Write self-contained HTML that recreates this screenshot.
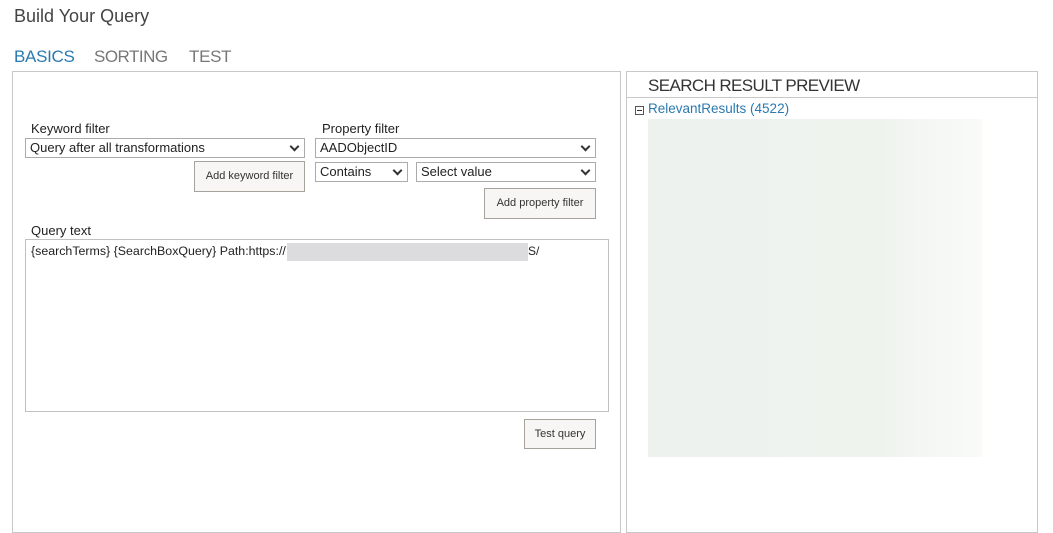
<!DOCTYPE html>
<html><head><style>
body{margin:0;width:1053px;height:521px;background:#fff;font-family:"Liberation Sans",sans-serif;position:relative;overflow:hidden;color:#333}
.a{position:absolute;white-space:nowrap}
.sel{position:absolute;border:1px solid #ababab;background:#fff;font-size:13px;box-sizing:border-box;padding:2px 4px;color:#222;line-height:14px}
.sel:after{content:"";position:absolute;right:6px;top:4px;width:5px;height:5px;border-right:2px solid #333;border-bottom:2px solid #333;transform:rotate(45deg)}
.btn{position:absolute;border:1px solid #a6a39d;background:#f7f6f4;box-sizing:border-box;font-size:11px;color:#333;text-align:center}
</style></head><body>
<div class="a" style="left:14px;top:6px;font-size:18px;color:#444">Build Your Query</div>
<div class="a" style="left:14px;top:47px;font-size:17px;color:#2a7ab0;letter-spacing:-0.3px">BASICS</div>
<div class="a" style="left:94px;top:47px;font-size:17px;color:#777;letter-spacing:-0.5px">SORTING</div>
<div class="a" style="left:189px;top:47px;font-size:17px;color:#777;letter-spacing:-0.3px">TEST</div>
<div class="a" style="left:12px;top:71px;width:607px;height:460px;border:1px solid #c8c8c8"></div>
<div class="a" style="left:626px;top:71px;width:410px;height:460px;border:1px solid #c8c8c8"></div>
<div class="a" style="left:627px;top:97px;width:410px;height:1px;background:#c8c8c8"></div>
<div class="a" style="left:31px;top:121px;font-size:13px;color:#222">Keyword filter</div>
<div class="sel" style="left:25px;top:138px;width:280px;height:20px">Query after all transformations</div>
<div class="btn" style="left:194px;top:161px;width:111px;height:31px;line-height:29px">Add keyword filter</div>
<div class="a" style="left:322px;top:121px;font-size:13px;color:#222">Property filter</div>
<div class="sel" style="left:315px;top:138px;width:281px;height:20px">AADObjectID</div>
<div class="sel" style="left:315px;top:162px;width:93px;height:20px">Contains</div>
<div class="sel" style="left:416px;top:162px;width:180px;height:20px">Select value</div>
<div class="btn" style="left:484px;top:188px;width:112px;height:31px;line-height:29px">Add property filter</div>
<div class="a" style="left:31px;top:223px;font-size:13px;color:#222">Query text</div>
<div class="a" style="left:25px;top:239px;width:582px;height:171px;border:1px solid #c0c0c0"></div>
<div class="a" style="left:31px;top:244px;font-size:12.4px;color:#222">{searchTerms} {SearchBoxQuery} Path:https://</div>
<div class="a" style="left:287px;top:243px;width:241px;height:18px;background:#dcdcde"></div>
<div class="a" style="left:528px;top:244px;font-size:12px;color:#222">S/</div>
<div class="btn" style="left:524px;top:419px;width:72px;height:30px;line-height:28px">Test query</div>
<div class="a" style="left:648px;top:76px;font-size:17px;color:#333;letter-spacing:-0.6px">SEARCH RESULT PREVIEW</div>
<div class="a" style="left:635px;top:106px;width:7px;height:7px;border:1px solid #555;font-size:0"><div style="margin:3px 1px;height:1px;background:#333"></div></div>
<div class="a" style="left:648px;top:101px;font-size:13.5px;color:#2a7ab0">RelevantResults (4522)</div>
<div class="a" style="left:648px;top:119px;width:334px;height:338px;background:linear-gradient(90deg,#eef2ee 0%,#eff3ee 70%,#fafbf9 100%)"></div>
</body></html>
